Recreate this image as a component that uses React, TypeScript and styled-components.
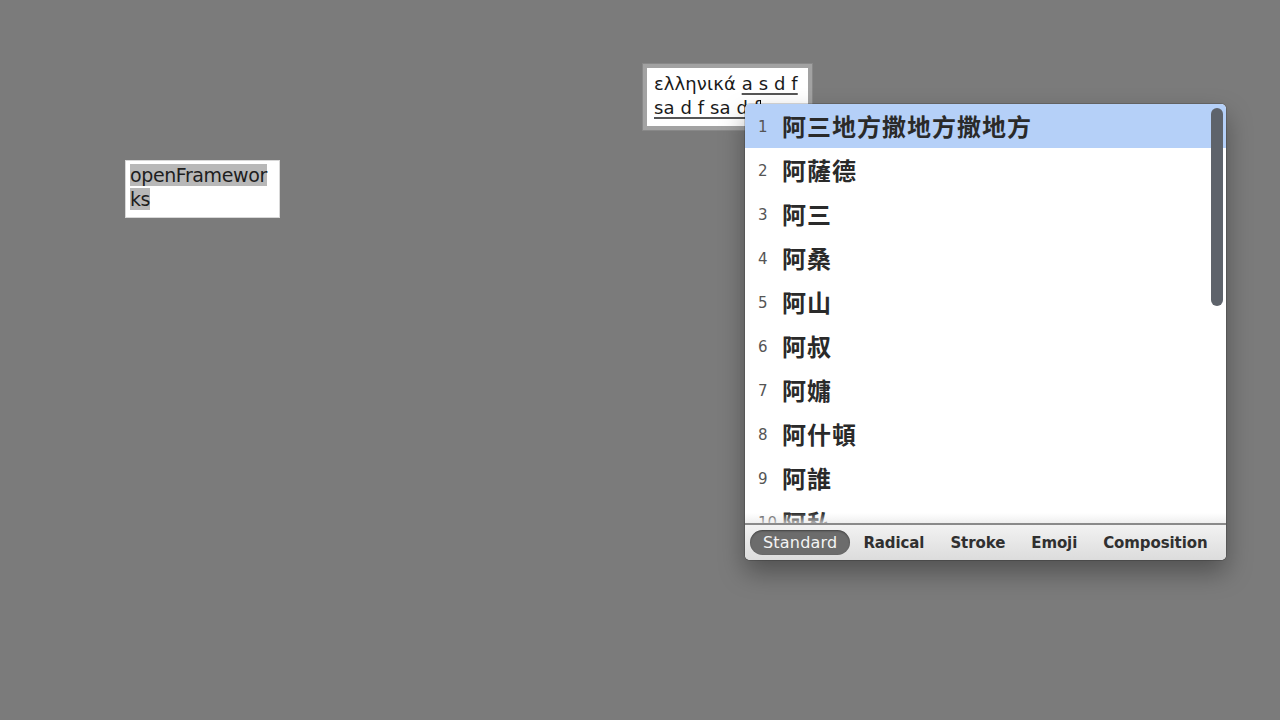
import React from 'react';
import styled, { createGlobalStyle } from 'styled-components';

const GlobalStyle = createGlobalStyle`
  html, body {
    margin: 0;
    padding: 0;
    background: #7b7b7b;
  }
  body {
    font-family: "DejaVu Sans", "Noto Sans CJK TC", sans-serif;
  }
`;

const candidates = [
  '阿三地方撒地方撒地方',
  '阿薩德',
  '阿三',
  '阿桑',
  '阿山',
  '阿叔',
  '阿嫞',
  '阿什頓',
  '阿誰',
  '阿私',
];

const tabs = ['Standard', 'Radical', 'Stroke', 'Emoji', 'Composition'];

const App: React.FC = () => {
  return (
    <Desktop>
      <GlobalStyle />
      <TextBox>
        <Selected>openFramewor</Selected>
        <br />
        <Selected>ks</Selected>
      </TextBox>

      <GreekBox>
        <GreekLine>
          ελληνικά <Marked>a s d f</Marked>
        </GreekLine>
        <GreekLine>
          <Marked>sa d f sa d f</Marked>
          <Caret />
        </GreekLine>
      </GreekBox>

      <CandidateWindow>
        <List>
          {candidates.map((c, i) => (
            <Row key={c} active={i === 0}>
              <Num>{i + 1}</Num>
              <Word>{c}</Word>
            </Row>
          ))}
          <Fade />
          <ScrollThumb />
        </List>
        <TabBar>
          {tabs.map((t, i) => (
            <Tab key={t} selected={i === 0}>
              {t}
            </Tab>
          ))}
        </TabBar>
      </CandidateWindow>
    </Desktop>
  );
};

const Desktop = styled.div`
  position: relative;
  width: 1280px;
  height: 720px;
  overflow: hidden;
  background: #7b7b7b;
`;

const TextBox = styled.div`
  position: absolute;
  left: 125px;
  top: 160px;
  width: 145px;
  height: 52px;
  padding: 2px 4px;
  background: #fff;
  border: 1px solid #d8d8d8;
  font-family: "DejaVu Sans", sans-serif;
  font-size: 19px;
  line-height: 24px;
  letter-spacing: -0.4px;
  color: #1e1e1e;
  overflow: hidden;
  white-space: nowrap;
`;

const Selected = styled.span`
  background: #b8b8b8;
`;

const GreekBox = styled.div`
  position: absolute;
  left: 643px;
  top: 64px;
  width: 157px;
  height: 52px;
  padding: 4px 2px 2px;
  background: #fff;
  border: 4px solid #a2a2a2;
  box-shadow: 0 0 0 1px #888;
  overflow: hidden;
`;

const GreekLine = styled.div`
  font-family: "DejaVu Sans", sans-serif;
  font-size: 18px;
  line-height: 24px;
  letter-spacing: 0.1px;
  color: #1a1a1a;
  padding-left: 5px;
  white-space: nowrap;
`;

const Marked = styled.span`
  text-decoration: underline;
  text-decoration-thickness: 2px;
  text-underline-offset: 3px;
  text-decoration-color: #555;
`;

const Caret = styled.span`
  display: inline-block;
  width: 1px;
  height: 17px;
  background: #000;
  vertical-align: -3px;
`;

const CandidateWindow = styled.div`
  position: absolute;
  left: 745px;
  top: 104px;
  width: 481px;
  height: 456px;
  display: flex;
  flex-direction: column;
  background: #fff;
  border-radius: 5px;
  overflow: hidden;
  box-shadow: 0 12px 26px rgba(0, 0, 0, 0.35), 0 0 0 1px rgba(0, 0, 0, 0.15);
`;

const List = styled.div`
  position: relative;
  height: 419px;
  overflow: hidden;
  border-bottom: 2px solid #8a8a8a;
`;

const Row = styled.div<{ active?: boolean }>`
  display: flex;
  align-items: center;
  height: 44px;
  padding-left: 13px;
  background: ${(p) => (p.active ? '#b5d0f8' : 'transparent')};
`;

const Num = styled.span`
  width: 24px;
  line-height: 1;
  font-family: "DejaVu Sans", sans-serif;
  font-size: 15px;
  color: #555;
  padding-top: 2px;
`;

const Word = styled.span`
  line-height: 1;
  font-family: "Noto Sans CJK TC", sans-serif;
  font-weight: 700;
  font-size: 24px;
  letter-spacing: 1px;
  color: #2a2a2a;
`;

const Fade = styled.div`
  position: absolute;
  left: 0;
  right: 0;
  bottom: 0;
  height: 10px;
  background: linear-gradient(rgba(255, 255, 255, 0), rgba(232, 232, 232, 0.7));
`;

const ScrollThumb = styled.div`
  position: absolute;
  right: 3px;
  top: 4px;
  width: 12px;
  height: 198px;
  border-radius: 6px;
  background: #5e636b;
`;

const TabBar = styled.div`
  flex: 1;
  display: flex;
  align-items: center;
  padding: 0 5px;
  background: linear-gradient(#f2f2f2, #dcdcdc);
`;

const Tab = styled.div<{ selected?: boolean }>`
  height: 25px;
  display: flex;
  align-items: center;
  padding: 0 13px;
  border-radius: 13px;
  font-family: "DejaVu Sans", sans-serif;
  font-size: ${(p) => (p.selected ? '16px' : '15px')};
  letter-spacing: ${(p) => (p.selected ? '0.2px' : '-0.1px')};
  font-weight: ${(p) => (p.selected ? 400 : 700)};
  color: ${(p) => (p.selected ? '#f4f4f4' : '#303030')};
  background: ${(p) => (p.selected ? '#6c6c6c' : 'transparent')};
  box-shadow: ${(p) => (p.selected ? 'inset 0 1px 2px rgba(0,0,0,0.4)' : 'none')};
`;

export default App;
